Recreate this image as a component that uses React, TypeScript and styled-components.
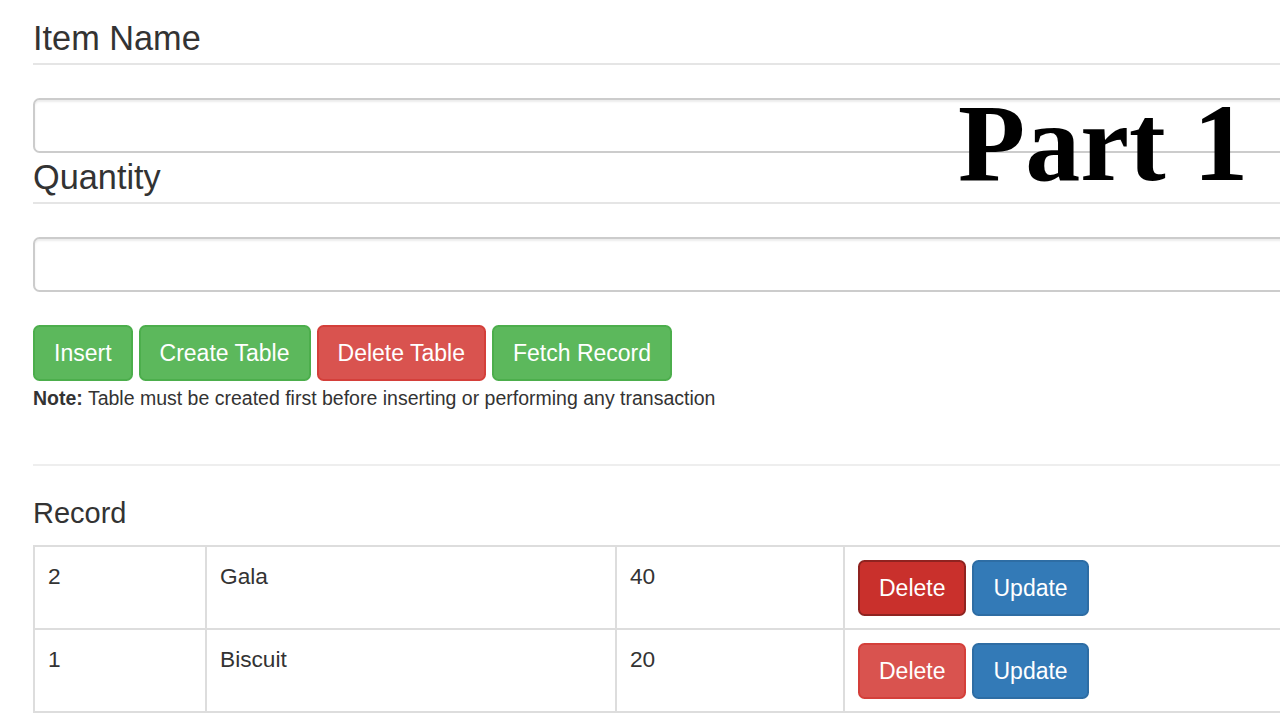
import React from "react";
import styled, { createGlobalStyle, css } from "styled-components";

const GlobalStyle = createGlobalStyle`
  html, body {
    margin: 0;
    padding: 0;
    background: #ffffff;
  }
  body {
    font-family: "Liberation Sans", Arial, Helvetica, sans-serif;
    color: #333333;
    overflow: hidden;
  }
  * { box-sizing: border-box; }
`;

const Screen = styled.div`
  position: relative;
  width: 1280px;
  height: 720px;
  overflow: hidden;
  background: #ffffff;
`;

const Page = styled.div`
  width: 1520px;
  padding: 14px 0 0 33px;
`;

const Legend = styled.div`
  font-size: 34.3px;
  line-height: 49px;
  color: #333333;
  border-bottom: 2px solid #e5e5e5;
  margin-bottom: 33px;
`;

const TextInput = styled.input`
  display: block;
  width: 100%;
  height: 55px;
  border: 2px solid #cccccc;
  border-radius: 6.5px;
  box-shadow: inset 0 2px 2px rgba(0, 0, 0, 0.075);
  font-family: inherit;
  font-size: 22.7px;
  padding: 10px 19px;
  color: #555555;
  background: #ffffff;
  outline: none;
`;

const ButtonRow = styled.div`
  display: flex;
  gap: 6px;
  margin-top: 33px;
`;

type Variant = "success" | "danger" | "dangerActive" | "primary";

const variants: Record<Variant, ReturnType<typeof css>> = {
  success: css`
    background: #5cb85c;
    border-color: #4cae4c;
  `,
  danger: css`
    background: #d9534f;
    border-color: #d43f3a;
  `,
  dangerActive: css`
    background: #c9302c;
    border-color: #8f2320;
  `,
  primary: css`
    background: #337ab7;
    border-color: #2e6da4;
  `,
};

const Btn = styled.button<{ $variant: Variant }>`
  display: inline-block;
  font-family: "Liberation Sans", Arial, Helvetica, sans-serif;
  font-size: 23px;
  line-height: 32px;
  padding: 10px 19px;
  border: 2px solid transparent;
  border-radius: 6.5px;
  color: #ffffff;
  white-space: nowrap;
  cursor: pointer;
  ${(p) => variants[p.$variant]}
`;

const Note = styled.p`
  margin: 4px 0 0;
  font-size: 19.5px;
  line-height: 27px;
  color: #333333;
  b {
    font-weight: 700;
  }
`;

const Rule = styled.hr`
  margin: 52px 0 0;
  border: 0;
  border-top: 2px solid #eeeeee;
`;

const SectionTitle = styled.h4`
  margin: 31px 0 16px;
  font-size: 29px;
  font-weight: 400;
  line-height: 32px;
  color: #333333;
`;

const Table = styled.table`
  width: 1440px;
  table-layout: fixed;
  border-collapse: collapse;
  border: 2px solid #dddddd;
`;

const Cell = styled.td`
  border: 2px solid #dddddd;
  padding: 13px 13px 12px;
  vertical-align: top;
  font-size: 22.7px;
  line-height: 32.4px;
  color: #333333;
`;

const Actions = styled.div`
  display: flex;
  gap: 6px;
`;

const Overlay = styled.div`
  position: absolute;
  left: 958px;
  top: 73px;
  font-family: "Liberation Serif", "Times New Roman", serif;
  font-weight: 700;
  font-size: 110px;
  line-height: 140px;
  color: #000000;
  white-space: nowrap;
  pointer-events: none;
`;

const records = [
  { id: 2, name: "Gala", qty: 40, active: true },
  { id: 1, name: "Biscuit", qty: 20, active: false },
];

export default function App() {
  return (
    <Screen>
      <GlobalStyle />
      <Page>
        <Legend>Item Name</Legend>
        <TextInput type="text" />
        <Legend>Quantity</Legend>
        <TextInput type="text" />
        <ButtonRow>
          <Btn $variant="success">Insert</Btn>
          <Btn $variant="success">Create Table</Btn>
          <Btn $variant="danger">Delete Table</Btn>
          <Btn $variant="success">Fetch Record</Btn>
        </ButtonRow>
        <Note>
          <b>Note:</b> Table must be created first before inserting or performing any transaction
        </Note>
        <Rule />
        <SectionTitle>Record</SectionTitle>
        <Table>
          <colgroup>
            <col style={{ width: 172 }} />
            <col style={{ width: 410 }} />
            <col style={{ width: 228 }} />
            <col />
          </colgroup>
          <tbody>
            {records.map((r) => (
              <tr key={r.id}>
                <Cell>{r.id}</Cell>
                <Cell>{r.name}</Cell>
                <Cell>{r.qty}</Cell>
                <Cell>
                  <Actions>
                    <Btn $variant={r.active ? "dangerActive" : "danger"}>Delete</Btn>
                    <Btn $variant="primary">Update</Btn>
                  </Actions>
                </Cell>
              </tr>
            ))}
          </tbody>
        </Table>
      </Page>
      <Overlay>Part 1</Overlay>
    </Screen>
  );
}
